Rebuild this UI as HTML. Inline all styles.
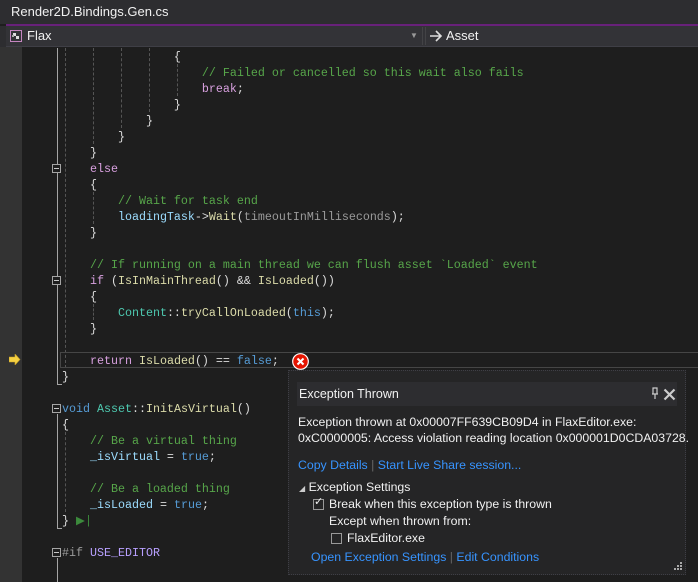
<!DOCTYPE html>
<html style="overflow:hidden;height:582px"><head><style>
body{margin:0;width:698px;height:582px;overflow:hidden;background:#1e1e1e;font-family:"Liberation Sans",sans-serif;position:relative}
.tabbar{position:absolute;left:0;top:0;width:698px;height:24px;background:#2d2d30;color:#f1f1f1;font-size:13px}
.tabbar span{position:absolute;left:11px;top:4px}
.purple{position:absolute;left:6px;top:24px;width:692px;height:2px;background:#68217a}
.nav{position:absolute;left:6px;top:26px;width:692px;height:20px;background:#333337;border-bottom:1px solid #3f3f46}
.dd1{position:absolute;left:0;top:1px;width:416px;height:18px;background:#333337;border-right:1px solid #434346;color:#f1f1f1;font-size:13px}
.dd2{position:absolute;left:419px;top:1px;width:273px;height:18px;color:#f1f1f1;font-size:13px;border-left:1px solid #434346}
.margin{position:absolute;left:0;top:47px;width:22px;height:535px;background:#333333}
.leftstrip{position:absolute;left:0;top:26px;width:6px;height:21px;background:#2d2d30}
.code{position:absolute;left:62px;top:49px;font-family:"Liberation Mono",monospace;font-size:11.67px;line-height:16px;color:#dcdcdc;white-space:pre}
.c{color:#57a64a}.k{color:#569cd6}.ck{color:#d8a0df}.f{color:#dcdcaa}.t{color:#4ec9b0}.v{color:#9cdcfe}.p{color:#9a9a9a}
.ol{position:absolute;background:#a5a5a5;width:1px}
.box{position:absolute;width:9px;height:9px;border:1px solid #a5a5a5;box-sizing:border-box;background:#1e1e1e}
.box:after{content:"";position:absolute;left:1px;top:3px;width:5px;height:1px;background:#c8c8c8}
.guide{position:absolute;width:0;border-left:1px dashed #555}
.cur{position:absolute;left:60px;top:352px;width:640px;height:16px;border:1px solid #464646;box-sizing:border-box}
.pop{position:absolute;left:288px;top:370px;width:398px;height:205px;background:#252526;border:1px dotted #3f3f46;box-sizing:border-box}
.ph{position:absolute;left:8px;top:11px;width:380px;height:24px;background:#2d2d30;color:#f1f1f1;font-size:12.5px}
.pt{position:absolute;color:#f1f1f1;font-size:12.3px;white-space:nowrap}
.lnk{color:#3794ff}
.sep{color:#666}
.cb{position:absolute;width:11px;height:11px;border:1px solid #999;box-sizing:border-box}
</style></head><body>
<div class="tabbar"><span>Render2D.Bindings.Gen.cs</span></div>
<div class="purple"></div>
<div class="leftstrip"></div>
<div class="nav">
 <div class="dd1"><svg style="position:absolute;left:4px;top:3px" width="12" height="12"><rect x="0.5" y="0.5" width="11" height="11" fill="none" stroke="#c586c0"/><rect x="3" y="3" width="3" height="3" fill="#ddd"/><rect x="6" y="6" width="3" height="3" fill="#ddd"/><rect x="2" y="5" width="2" height="2" fill="#aaa"/></svg><span style="position:absolute;left:21px;top:1px">Flax</span><span style="position:absolute;left:404px;top:4px;color:#999;font-size:8px">▼</span></div>
 <div class="dd2"><svg style="position:absolute;left:3px;top:3px" width="14" height="12"><path d="M1 6H12M7 1L12 6L7 11" stroke="#ddd" stroke-width="1.6" fill="none"/></svg><span style="position:absolute;left:20px;top:1px">Asset</span></div>
</div>
<div class="margin"></div>
<div class="ol" style="left:57px;top:48px;height:336px"></div>
<div class="ol" style="left:57px;top:384px;width:5px;height:1px"></div>
<div class="ol" style="left:57px;top:414px;height:114px"></div>
<div class="ol" style="left:57px;top:528px;width:5px;height:1px"></div>
<div class="ol" style="left:57px;top:558px;height:24px"></div>
<div class="box" style="left:52px;top:164px"></div>
<div class="box" style="left:52px;top:276px"></div>
<div class="box" style="left:52px;top:404px"></div>
<div class="box" style="left:52px;top:548px"></div>
<div class="guide" style="left:65px;top:48px;height:320px"></div>
<div class="guide" style="left:93px;top:48px;height:96px"></div>
<div class="guide" style="left:121px;top:48px;height:80px"></div>
<div class="guide" style="left:149px;top:48px;height:64px"></div>
<div class="guide" style="left:177px;top:64px;height:32px"></div>
<div class="guide" style="left:93px;top:192px;height:32px"></div>
<div class="guide" style="left:93px;top:304px;height:16px"></div>
<div class="guide" style="left:65px;top:432px;height:80px"></div>
<div class="cur"></div>
<div class="code">                {
                    <span class="c">// Failed or cancelled so this wait also fails</span>
                    <span class="ck">break</span>;
                }
            }
        }
    }
    <span class="ck">else</span>
    {
        <span class="c">// Wait for task end</span>
        <span class="v">loadingTask</span>-&gt;<span class="f">Wait</span>(<span class="p">timeoutInMilliseconds</span>);
    }

    <span class="c">// If running on a main thread we can flush asset `Loaded` event</span>
    <span class="ck">if</span> (<span class="f">IsInMainThread</span>() &amp;&amp; <span class="f">IsLoaded</span>())
    {
        <span class="t">Content</span>::<span class="f">tryCallOnLoaded</span>(<span class="k">this</span>);
    }

    <span class="ck">return</span> <span class="f">IsLoaded</span>() == <span class="k">false</span>;
}

<span class="k">void</span> <span class="t">Asset</span>::<span class="f">InitAsVirtual</span>()
{
    <span class="c">// Be a virtual thing</span>
    <span class="v">_isVirtual</span> = <span class="k">true</span>;

    <span class="c">// Be a loaded thing</span>
    <span class="v">_isLoaded</span> = <span class="k">true</span>;
} <span style="color:#3c8a3c">▶|</span>

<span class="p">#if</span> <span style="color:#b8a0ff">USE_EDITOR</span>
</div>
<svg style="position:absolute;left:9px;top:354px" width="12" height="11"><path d="M0 3H6V0L11 5.5L6 11V8H0Z" fill="#f5d142" stroke="#c9a227" stroke-width="0.6"/></svg>
<svg style="position:absolute;left:292px;top:353px" width="17" height="17"><circle cx="8.5" cy="8.5" r="7.8" fill="#e51400" stroke="#fff" stroke-width="1.2"/><path d="M5.5 5.5L11.5 11.5M11.5 5.5L5.5 11.5" stroke="#fff" stroke-width="2"/></svg>
<div class="pop">
 <div class="ph"><span style="position:absolute;left:2px;top:5px">Exception Thrown</span>
 <svg style="position:absolute;left:354px;top:5px" width="8" height="13"><path d="M2 1H6V7H2Z M1 7H7 M4 7V12" stroke="#ccc" stroke-width="1.2" fill="none"/></svg>
 <svg style="position:absolute;left:366px;top:6px" width="13" height="13"><path d="M1.5 1.5L11.5 11.5M11.5 1.5L1.5 11.5" stroke="#ccc" stroke-width="2.2"/></svg></div>
 <div class="pt" style="left:9px;top:44px">Exception thrown at 0x00007FF639CB09D4 in FlaxEditor.exe:</div>
 <div class="pt" style="left:9px;top:60px">0xC0000005: Access violation reading location 0x000001D0CDA03728.</div>
 <div class="pt" style="left:9px;top:87px"><span class="lnk">Copy Details</span> <span class="sep">|</span> <span class="lnk">Start Live Share session...</span></div>
 <div class="pt" style="left:10px;top:109px"><span style="font-size:8px;color:#ccc">◢</span> Exception Settings</div>
 <div class="cb" style="left:24px;top:128px"></div><span class="pt" style="left:25px;top:124px;font-size:11px">✓</span>
 <div class="pt" style="left:40px;top:126px">Break when this exception type is thrown</div>
 <div class="pt" style="left:40px;top:143px">Except when thrown from:</div>
 <div class="cb" style="left:42px;top:162px"></div>
 <div class="pt" style="left:58px;top:160px">FlaxEditor.exe</div>
 <div class="pt" style="left:22px;top:179px"><span class="lnk">Open Exception Settings</span> <span class="sep">|</span> <span class="lnk">Edit Conditions</span></div>
 <svg style="position:absolute;left:384px;top:190px" width="10" height="10" fill="#aaa"><rect x="7" y="1" width="2" height="2"/><rect x="4" y="4" width="2" height="2"/><rect x="7" y="4" width="2" height="2"/><rect x="1" y="7" width="2" height="2"/><rect x="4" y="7" width="2" height="2"/><rect x="7" y="7" width="2" height="2"/></svg>
</div>
</body></html>
